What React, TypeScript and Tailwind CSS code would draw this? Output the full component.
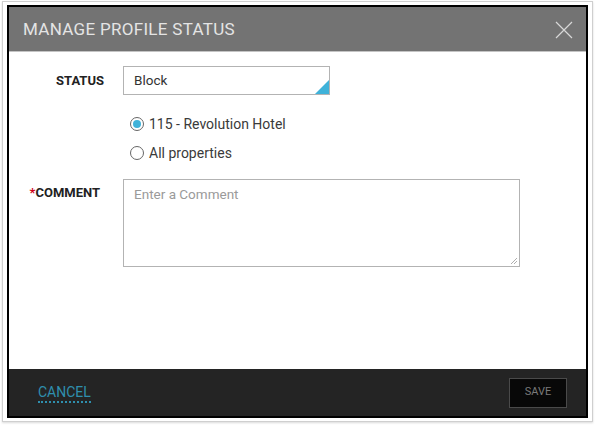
import React from "react";

export default function App() {
  const font = { fontFamily: "Roboto, 'Liberation Sans', sans-serif" };
  return (
    <div className="w-[595px] h-[426px] bg-white pl-[2px] pt-[1px]" style={font}>
      <div className="w-[591px] h-[421px] border border-[#cfcfcf] pl-[4px] pt-[3px] shadow-[0_1px_2px_rgba(0,0,0,0.15)]">
        <div className="w-[581px] h-[413px] border-2 border-black flex flex-col bg-white">
          <div className="h-[45px] bg-[#737373] border-b border-[#c4c4c4] flex items-center justify-between pl-[14px] pr-[13px]">
            <span className="text-[17px] text-[#e4e4e4] tracking-[0.3px] mt-[1px]">MANAGE PROFILE STATUS</span>
            <svg width="18" height="18" viewBox="0 0 18 18" className="mt-[2px]">
              <path d="M1 1 L17 17 M17 1 L1 17" stroke="#d8d8d8" strokeWidth="1.2" />
            </svg>
          </div>
          <div className="flex-1 pt-[14px]">
            <div className="flex items-center">
              <div className="w-[95px] text-right text-[13px] font-bold text-[#222]">STATUS</div>
              <div className="ml-[19px] w-[207px] h-[29px] border border-[#b3b3b3] relative flex items-center pl-[10px] text-[13.5px] text-[#333]">
                Block
                <div className="absolute right-0 bottom-0 w-0 h-0 border-l-[14px] border-l-transparent border-b-[14px] border-b-[#3fb2d9]" />
              </div>
            </div>
            <div className="ml-[121px] mt-[22px] flex flex-col gap-[15px]">
              <label className="flex items-center gap-[5px] text-[14px] text-[#3a3a3a] h-[14px]">
                <span className="w-[14px] h-[14px] rounded-full border border-[#666] flex items-center justify-center">
                  <span className="w-[8px] h-[8px] rounded-full bg-[#3fb2d9]" />
                </span>
                115 - Revolution Hotel
              </label>
              <label className="flex items-center gap-[5px] text-[14px] text-[#3a3a3a] h-[14px]">
                <span className="w-[14px] h-[14px] rounded-full border border-[#666]" />
                All properties
              </label>
            </div>
            <div className="flex items-start mt-[19px]">
              <div className="w-[91px] text-right text-[13px] font-bold text-[#222] pt-[4px]">
                <span className="text-[#d0021b]">*</span>COMMENT
              </div>
              <div className="ml-[23px] w-[397px] h-[88px] border border-[#b3b3b3] relative pl-[10px] pt-[4px] text-[13.5px] text-[#9a9a9a]">
                Enter a Comment
                <svg width="8" height="8" viewBox="0 0 8 8" className="absolute right-[1px] bottom-[1px]">
                  <path d="M7 1 L1 7 M7 4 L4 7" stroke="#999" strokeWidth="0.8" />
                </svg>
              </div>
            </div>
          </div>
          <div className="h-[47px] bg-[#242424] flex items-center justify-between pl-[29px] pr-[19px]">
            <span className="text-[14px] text-[#2f8fae] border-b-2 border-dotted border-[#2f8fae] leading-[14px] pb-[2px] mt-[2px]">CANCEL</span>
            <div className="w-[58px] h-[30px] bg-[#080808] border border-[#4a4a4a] flex items-center justify-center text-[11px] text-[#7a7a7a]">SAVE</div>
          </div>
        </div>
      </div>
    </div>
  );
}
